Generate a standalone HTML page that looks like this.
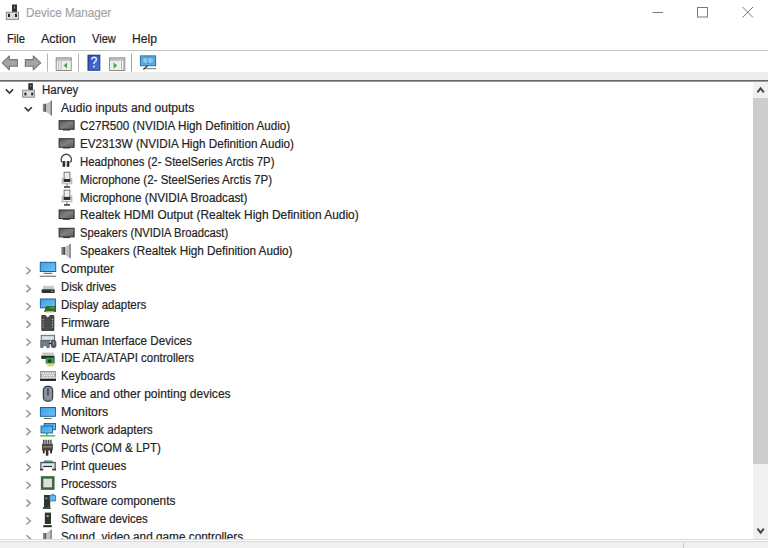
<!DOCTYPE html>
<html><head><meta charset="utf-8">
<style>
html,body{margin:0;padding:0;}
body{width:768px;height:548px;overflow:hidden;position:relative;background:#fff;font-family:"Liberation Sans",sans-serif;}
.a{position:absolute;}
.t{position:absolute;white-space:nowrap;font-size:12.5px;line-height:18px;color:#242424;transform-origin:0 0;-webkit-text-stroke:0.2px currentColor;}
.ic{position:absolute;overflow:visible;}
#tree{position:absolute;left:0;top:81px;width:753px;height:458px;overflow:hidden;}
#treein{position:absolute;left:0;top:-81px;width:753px;height:620px;}
</style></head><body>
<!-- title bar -->
<svg class="ic" style="left:0;top:0" width="24" height="24">
  <rect x="12" y="4.5" width="5" height="7.5" fill="#2f2f2f"/>
  <rect x="14" y="6.5" width="1" height="2" fill="#aaa"/>
  <rect x="6.3" y="12.2" width="12.2" height="7.2" fill="#dcdcdc" stroke="#8a8a8a" stroke-width="1"/>
  <rect x="8" y="13.8" width="2" height="3.2" fill="#222"/>
  <rect x="15" y="13.8" width="2" height="3.2" fill="#222"/>
</svg>
<span class="t" id="title" style="left:25.5px;top:4px;color:#a2a2a2;-webkit-text-stroke:0.15px #a2a2a2;transform:scaleX(0.936)">Device Manager</span>
<svg class="ic" style="left:640px;top:0" width="128" height="26">
  <line x1="12.5" y1="12.5" x2="23" y2="12.5" stroke="#7a7a7a" stroke-width="1"/>
  <rect x="57.5" y="7.5" width="10" height="9.5" fill="none" stroke="#7a7a7a" stroke-width="1"/>
  <path d="M102.5 7 L113 17.5 M113 7 L102.5 17.5" stroke="#7a7a7a" stroke-width="1"/>
</svg>
<!-- menu -->
<span class="t" id="m0" style="left:7px;top:30px;transform:scaleX(0.9)">File</span>
<span class="t" id="m1" style="left:41px;top:30px;">Action</span>
<span class="t" id="m2" style="left:91.5px;top:30px;transform:scaleX(0.885)">View</span>
<span class="t" id="m3" style="left:132px;top:30px;transform:scaleX(0.97)">Help</span>
<div class="a" style="left:0;top:50px;width:768px;height:1px;background:#c4c4c4"></div>
<!-- toolbar -->
<svg class="ic" style="left:0;top:51px" width="170" height="22">
  <defs>
    <linearGradient id="hb" x1="0" y1="0" x2="1" y2="1"><stop offset="0" stop-color="#2f4fb0"/><stop offset="1" stop-color="#4f74d6"/></linearGradient>
  </defs>
  <!-- back arrow -->
  <path d="M2.3 11.9 L9.3 5 L9.3 8.6 L17.4 8.6 L17.4 15.2 L9.3 15.2 L9.3 18.9 Z" fill="#a4a4a4" stroke="#747474" stroke-width="1.1" stroke-linejoin="round"/>
  <!-- forward arrow -->
  <path d="M40.7 11.9 L33.3 5 L33.3 8.6 L25.3 8.6 L25.3 15.2 L33.3 15.2 L33.3 18.9 Z" fill="#a4a4a4" stroke="#747474" stroke-width="1.1" stroke-linejoin="round"/>
  <line x1="47.5" y1="2.6" x2="47.5" y2="20.6" stroke="#b4b4b4" stroke-width="1"/>
  <!-- console tree icon -->
  <rect x="56.2" y="6.9" width="15" height="12.6" fill="#f4f4f4" stroke="#8c8c8c" stroke-width="1"/>
  <rect x="56.2" y="6.9" width="15" height="2.6" fill="#979797"/>
  <rect x="57" y="7.5" width="13.4" height="1.2" fill="#d0d0d0"/>
  <rect x="58.2" y="10" width="1" height="9" fill="#b8b8b8"/>
  <rect x="60.6" y="10" width="1" height="9" fill="#b8b8b8"/>
  <rect x="62" y="10" width="8.6" height="9" fill="#e4f4e0"/>
  <path d="M63.6 14.6 L67 11.6 L67 17.6 Z" fill="#49a449"/>
  <line x1="78.5" y1="2.6" x2="78.5" y2="20.6" stroke="#b4b4b4" stroke-width="1"/>
  <!-- help -->
  <rect x="88" y="4.2" width="11.8" height="15" fill="url(#hb)" stroke="#1c2f7a" stroke-width="1"/>
  <path d="M91.6 8.6 Q91.8 6.3 94 6.3 Q96.4 6.3 96.4 8.6 Q96.4 10.2 94.8 11 Q93.9 11.5 93.9 13" fill="none" stroke="#dfe6ff" stroke-width="1.5"/>
  <rect x="93.1" y="14.6" width="1.7" height="1.8" fill="#dfe6ff"/>
  <!-- action pane icon -->
  <rect x="109.6" y="6.9" width="15.2" height="12.6" fill="#f4f4f4" stroke="#8c8c8c" stroke-width="1"/>
  <rect x="109.6" y="6.9" width="15.2" height="2.6" fill="#979797"/>
  <rect x="110.4" y="7.5" width="13.6" height="1.2" fill="#d0d0d0"/>
  <rect x="121" y="10" width="1" height="9" fill="#b8b8b8"/>
  <rect x="123.2" y="10" width="1" height="9" fill="#b8b8b8"/>
  <rect x="110.2" y="10" width="10" height="9" fill="#e4f4e0"/>
  <path d="M117.2 14.6 L113.6 11.4 L113.6 17.8 Z" fill="#49a449"/>
  <line x1="131.5" y1="2.6" x2="131.5" y2="20.6" stroke="#a0a0a0" stroke-width="1"/>
  <!-- scan monitor -->
  <rect x="140.4" y="4.9" width="15.2" height="9.8" fill="#5cb2ee" stroke="#2a6a9e" stroke-width="1"/>
  <circle cx="145.6" cy="9.6" r="3.3" fill="#86c8f4" stroke="#3f8cc6" stroke-width="0.8"/>
  <circle cx="150.6" cy="9.6" r="3.3" fill="#86c8f4" stroke="#3f8cc6" stroke-width="0.8"/>
  <path d="M147.5 14.8 L143.3 18.6" stroke="#3a3a3a" stroke-width="1.3"/>
  <path d="M145 17.6 L156 17.6" stroke="#8a8a8a" stroke-width="1.2"/>
</svg>
<div class="a" style="left:0;top:72px;width:768px;height:8px;background:#ececec"></div>
<div class="a" style="left:0;top:80px;width:768px;height:1px;background:#666"></div>
<div class="a" style="left:0;top:81px;width:768px;height:1px;background:#9c9c9c"></div>
<!-- tree -->
<div id="tree"><div id="treein">
<span class="t tree" id="r0" style="left:41.70px;top:81.36px;transform:scaleX(0.9154)">Harvey</span>
<svg class="ic" style="left:0;top:0" width="40" height="620"><path d="M5.90 89.36 L9.50 93.06 L13.10 89.36" fill="none" stroke="#383838" stroke-width="1.6"/></svg>
<span class="t tree" id="r1" style="left:60.80px;top:99.23px;transform:scaleX(0.9679)">Audio inputs and outputs</span>
<svg class="ic" style="left:0;top:0" width="40" height="620"><path d="M24.65 107.23 L28.25 110.93 L31.85 107.23" fill="none" stroke="#383838" stroke-width="1.6"/></svg>
<span class="t tree" id="r2" style="left:79.50px;top:117.10px;transform:scaleX(0.9339)">C27R500 (NVIDIA High Definition Audio)</span>
<span class="t tree" id="r3" style="left:79.50px;top:134.97px;transform:scaleX(0.9357)">EV2313W (NVIDIA High Definition Audio)</span>
<span class="t tree" id="r4" style="left:79.50px;top:152.84px;transform:scaleX(0.9085)">Headphones (2- SteelSeries Arctis 7P)</span>
<span class="t tree" id="r5" style="left:79.50px;top:170.71px;transform:scaleX(0.9213)">Microphone (2- SteelSeries Arctis 7P)</span>
<span class="t tree" id="r6" style="left:79.50px;top:188.58px;transform:scaleX(0.9420)">Microphone (NVIDIA Broadcast)</span>
<span class="t tree" id="r7" style="left:79.50px;top:206.45px;transform:scaleX(0.9526)">Realtek HDMI Output (Realtek High Definition Audio)</span>
<span class="t tree" id="r8" style="left:79.50px;top:224.32px;transform:scaleX(0.8963)">Speakers (NVIDIA Broadcast)</span>
<span class="t tree" id="r9" style="left:79.50px;top:242.19px;transform:scaleX(0.9382)">Speakers (Realtek High Definition Audio)</span>
<span class="t tree" id="r10" style="left:60.80px;top:260.06px;transform:scaleX(0.9667)">Computer</span>
<svg class="ic" style="left:0;top:0" width="40" height="620"><path d="M26.4 267.26 L30.3 270.76 L26.4 274.26" fill="none" stroke="#969696" stroke-width="1.5"/></svg>
<span class="t tree" id="r11" style="left:60.80px;top:277.93px;transform:scaleX(0.9033)">Disk drives</span>
<svg class="ic" style="left:0;top:0" width="40" height="620"><path d="M26.4 285.13 L30.3 288.63 L26.4 292.13" fill="none" stroke="#969696" stroke-width="1.5"/></svg>
<span class="t tree" id="r12" style="left:60.80px;top:295.80px;transform:scaleX(0.9152)">Display adapters</span>
<svg class="ic" style="left:0;top:0" width="40" height="620"><path d="M26.4 303.00 L30.3 306.50 L26.4 310.00" fill="none" stroke="#969696" stroke-width="1.5"/></svg>
<span class="t tree" id="r13" style="left:60.80px;top:313.67px;transform:scaleX(0.9333)">Firmware</span>
<svg class="ic" style="left:0;top:0" width="40" height="620"><path d="M26.4 320.87 L30.3 324.37 L26.4 327.87" fill="none" stroke="#969696" stroke-width="1.5"/></svg>
<span class="t tree" id="r14" style="left:60.80px;top:331.54px;transform:scaleX(0.9317)">Human Interface Devices</span>
<svg class="ic" style="left:0;top:0" width="40" height="620"><path d="M26.4 338.74 L30.3 342.24 L26.4 345.74" fill="none" stroke="#969696" stroke-width="1.5"/></svg>
<span class="t tree" id="r15" style="left:60.80px;top:349.41px;transform:scaleX(0.9174)">IDE ATA/ATAPI controllers</span>
<svg class="ic" style="left:0;top:0" width="40" height="620"><path d="M26.4 356.61 L30.3 360.11 L26.4 363.61" fill="none" stroke="#969696" stroke-width="1.5"/></svg>
<span class="t tree" id="r16" style="left:60.80px;top:367.28px;transform:scaleX(0.9086)">Keyboards</span>
<svg class="ic" style="left:0;top:0" width="40" height="620"><path d="M26.4 374.48 L30.3 377.98 L26.4 381.48" fill="none" stroke="#969696" stroke-width="1.5"/></svg>
<span class="t tree" id="r17" style="left:60.80px;top:385.15px;transform:scaleX(0.9649)">Mice and other pointing devices</span>
<svg class="ic" style="left:0;top:0" width="40" height="620"><path d="M26.4 392.35 L30.3 395.85 L26.4 399.35" fill="none" stroke="#969696" stroke-width="1.5"/></svg>
<span class="t tree" id="r18" style="left:60.80px;top:403.02px;transform:scaleX(0.9830)">Monitors</span>
<svg class="ic" style="left:0;top:0" width="40" height="620"><path d="M26.4 410.22 L30.3 413.72 L26.4 417.22" fill="none" stroke="#969696" stroke-width="1.5"/></svg>
<span class="t tree" id="r19" style="left:60.80px;top:420.89px;transform:scaleX(0.9361)">Network adapters</span>
<svg class="ic" style="left:0;top:0" width="40" height="620"><path d="M26.4 428.09 L30.3 431.59 L26.4 435.09" fill="none" stroke="#969696" stroke-width="1.5"/></svg>
<span class="t tree" id="r20" style="left:60.80px;top:438.76px;transform:scaleX(0.9215)">Ports (COM &amp; LPT)</span>
<svg class="ic" style="left:0;top:0" width="40" height="620"><path d="M26.4 445.96 L30.3 449.46 L26.4 452.96" fill="none" stroke="#969696" stroke-width="1.5"/></svg>
<span class="t tree" id="r21" style="left:60.80px;top:456.63px;transform:scaleX(0.9304)">Print queues</span>
<svg class="ic" style="left:0;top:0" width="40" height="620"><path d="M26.4 463.83 L30.3 467.33 L26.4 470.83" fill="none" stroke="#969696" stroke-width="1.5"/></svg>
<span class="t tree" id="r22" style="left:60.80px;top:474.50px;transform:scaleX(0.8885)">Processors</span>
<svg class="ic" style="left:0;top:0" width="40" height="620"><path d="M26.4 481.70 L30.3 485.20 L26.4 488.70" fill="none" stroke="#969696" stroke-width="1.5"/></svg>
<span class="t tree" id="r23" style="left:60.80px;top:492.37px;transform:scaleX(0.9458)">Software components</span>
<svg class="ic" style="left:0;top:0" width="40" height="620"><path d="M26.4 499.57 L30.3 503.07 L26.4 506.57" fill="none" stroke="#969696" stroke-width="1.5"/></svg>
<span class="t tree" id="r24" style="left:60.80px;top:510.24px;transform:scaleX(0.9117)">Software devices</span>
<svg class="ic" style="left:0;top:0" width="40" height="620"><path d="M26.4 517.44 L30.3 520.94 L26.4 524.44" fill="none" stroke="#969696" stroke-width="1.5"/></svg>
<span class="t tree" id="r25" style="left:60.80px;top:528.11px;transform:scaleX(0.9427)">Sound, video and game controllers</span>
<svg class="ic" style="left:0;top:0" width="40" height="620"><path d="M26.4 535.31 L30.3 538.81 L26.4 542.31" fill="none" stroke="#969696" stroke-width="1.5"/></svg>
<svg class="ic" style="left:0;top:0" width="753" height="620">
<defs>
  <linearGradient id="teal" x1="0" y1="0" x2="1" y2="0"><stop offset="0" stop-color="#3a90c8"/><stop offset="1" stop-color="#2fb8a8"/></linearGradient>
  <linearGradient id="mon" x1="0" y1="0" x2="1" y2="1">
    <stop offset="0" stop-color="#555"/><stop offset="0.5" stop-color="#808080"/><stop offset="1" stop-color="#5a5a5a"/>
  </linearGradient>
  <linearGradient id="spk" x1="0" y1="0" x2="1" y2="0">
    <stop offset="0" stop-color="#bdbdbd"/><stop offset="0.6" stop-color="#c4c4c4"/><stop offset="1" stop-color="#5e5e5e"/>
  </linearGradient>
  <linearGradient id="spkr" x1="0" y1="0" x2="1" y2="0">
    <stop offset="0" stop-color="#a0a0a0"/><stop offset="1" stop-color="#3e3e3e"/>
  </linearGradient>
  <linearGradient id="blue" x1="0" y1="0" x2="1" y2="1">
    <stop offset="0" stop-color="#3fa0e8"/><stop offset="1" stop-color="#6cc4f4"/>
  </linearGradient>
</defs>
<!-- row0 Harvey computer -->
<g>
  <rect x="28.3" y="83.2" width="4.6" height="6.8" fill="#2e2e2e"/>
  <rect x="30" y="85" width="1.2" height="1.6" fill="#9a9a9a"/>
  <rect x="22.6" y="90.2" width="11.8" height="7" fill="#dcdcdc" stroke="#8c8c8c" stroke-width="1"/>
  <rect x="24.4" y="92.6" width="2" height="2.8" fill="#252525"/>
  <rect x="31.2" y="92.6" width="2" height="2.8" fill="#252525"/>
</g>
<!-- row1 speaker -->
<g>
  <rect x="42.8" y="103.8" width="3.6" height="8" fill="url(#spkr)"/>
  <path d="M46.2 103.8 L52 100.2 L52 116 L46.2 112.1 Z" fill="url(#spk)"/>
</g>
<!-- level2 monitors rows 2,3,7,8 -->
<g id="monA">
  <rect x="59.1" y="120.7" width="15" height="8.6" fill="url(#mon)" stroke="#2c2c2c" stroke-width="1"/>
  <rect x="63" y="129.5" width="7" height="1" fill="#333"/>
</g>
<g transform="translate(0,18)">
  <rect x="59.1" y="120.7" width="15" height="8.6" fill="url(#mon)" stroke="#2c2c2c" stroke-width="1"/>
  <rect x="63" y="129.5" width="7" height="1" fill="#333"/>
</g>
<g transform="translate(0,89.3)">
  <rect x="59.1" y="120.7" width="15" height="8.6" fill="url(#mon)" stroke="#2c2c2c" stroke-width="1"/>
  <rect x="63" y="129.5" width="7" height="1" fill="#333"/>
</g>
<g transform="translate(0,107.6)">
  <rect x="59.1" y="120.7" width="15" height="8.6" fill="url(#mon)" stroke="#2c2c2c" stroke-width="1"/>
  <rect x="63" y="129.5" width="7" height="1" fill="#333"/>
</g>
<!-- row4 headphones -->
<g>
  <path d="M62.2 162.5 A5.1 5.1 0 1 1 70.4 162.5" fill="none" stroke="#4a4a4a" stroke-width="1.5"/>
  <rect x="62.2" y="161" width="3.2" height="5.8" rx="0.6" fill="#8a8a8a"/>
  <rect x="63.2" y="161" width="1.6" height="5.8" fill="#1c1c1c"/>
  <rect x="66.5" y="161" width="3.2" height="5.8" rx="0.6" fill="#8a8a8a"/>
  <rect x="67.3" y="161" width="1.6" height="5.8" fill="#1c1c1c"/>
</g>
<!-- row5,6 microphone -->
<g id="mic">
  <path d="M62.4 177.4 L62.4 183.6 L71.6 183.6 L71.6 177.4" fill="none" stroke="#bdbdbd" stroke-width="1.5"/>
  <rect x="64.1" y="172.2" width="5.8" height="9.4" fill="#ececec" stroke="#6a6a6a" stroke-width="0.9"/>
  <rect x="63.7" y="179" width="6.6" height="3" fill="#2e2e2e"/>
  <rect x="66.3" y="184" width="1.4" height="2.3" fill="#9a9a9a"/>
  <rect x="64" y="186.2" width="6" height="1.6" fill="#3e3e3e"/>
</g>
<g transform="translate(0,17.9)">
  <path d="M62.4 177.4 L62.4 183.6 L71.6 183.6 L71.6 177.4" fill="none" stroke="#bdbdbd" stroke-width="1.5"/>
  <rect x="64.1" y="172.2" width="5.8" height="9.4" fill="#ececec" stroke="#6a6a6a" stroke-width="0.9"/>
  <rect x="63.7" y="179" width="6.6" height="3" fill="#2e2e2e"/>
  <rect x="66.3" y="184" width="1.4" height="2.3" fill="#9a9a9a"/>
  <rect x="64" y="186.2" width="6" height="1.6" fill="#3e3e3e"/>
</g>
<!-- row9 speaker -->
<g>
  <rect x="61.2" y="247" width="3.8" height="7.8" fill="url(#spkr)"/>
  <path d="M65 247 L70.7 243.4 L70.7 258.7 L65 254.8 Z" fill="url(#spk)"/>
</g>
<!-- row10 computer -->
<g>
  <rect x="40.3" y="262.3" width="15.4" height="9.2" fill="url(#blue)" stroke="#1e5f99" stroke-width="1"/>
  <rect x="43.6" y="272.8" width="8.7" height="1" fill="#555"/>
  <rect x="39.8" y="275.6" width="16.3" height="1.4" fill="#8a8a8a"/>
</g>
<!-- row11 disk -->
<g>
  <path d="M42.5 289.2 L43.5 285.8 L53.5 285.8 L54.5 289.2 Z" fill="#c8c8c8"/>
  <rect x="41.6" y="289.2" width="13.1" height="3.9" rx="0.8" fill="#2e2e2e"/>
  <rect x="51" y="290.6" width="2" height="1.2" fill="#5fbf4f"/>
</g>
<!-- row12 display adapters -->
<g>
  <rect x="40.4" y="299" width="15" height="8.8" fill="url(#blue)" stroke="#1e5f99" stroke-width="1"/>
  <path d="M44 312 L46 306 L56 306 L56 312 Z" fill="#2f6a2a"/>
  <path d="M48 308 L53 306.5 L55 309 Z" fill="#58a040"/>
  <rect x="46" y="311" width="8" height="1.4" fill="#c9b44a"/>
</g>
<!-- row13 firmware -->
<g>
  <path d="M41.8 315.5 L45.5 315.5 L47.8 318.3 L50.1 315.5 L53.9 315.5 L53.9 330.5 L41.8 330.5 Z" fill="#4a4a4a" stroke="#2a2a2a" stroke-width="0.8"/>
  <g fill="#cfcfcf">
    <rect x="42.6" y="319" width="1" height="1"/><rect x="42.6" y="321.5" width="1" height="1"/><rect x="42.6" y="324" width="1" height="1"/><rect x="42.6" y="326.5" width="1" height="1"/>
    <rect x="52.1" y="319" width="1" height="1"/><rect x="52.1" y="321.5" width="1" height="1"/><rect x="52.1" y="324" width="1" height="1"/><rect x="52.1" y="326.5" width="1" height="1"/>
  </g>
</g>
<!-- row14 HID -->
<g>
  <rect x="41.2" y="335.3" width="13.4" height="5.2" fill="#c2ccd4" stroke="#5a6670" stroke-width="0.9"/>
  <rect x="42.4" y="336.8" width="11" height="0.8" fill="#eef2f4"/>
  <rect x="42.4" y="338.4" width="11" height="0.8" fill="#eef2f4"/>
  <path d="M40.6 340.6 L49.2 340.6 L49.4 347 Q49.4 347.8 48.6 347.8 L47 347.8 L46 345.6 L43.6 345.6 L42.8 347.8 L41.4 347.8 Q40.6 347.8 40.6 347 Z" fill="#6f7e8a" stroke="#46525c" stroke-width="0.6"/>
  <rect x="49" y="342.6" width="2.6" height="1.6" fill="#2a2a2a"/>
  <rect x="51.3" y="340.4" width="4.6" height="7.2" rx="1.8" fill="#555b62" stroke="#333" stroke-width="0.7"/>
  <rect x="53.2" y="341.6" width="0.9" height="3" fill="#a8b0b8"/>
</g>
<!-- row15 IDE -->
<g>
  <rect x="42.3" y="352.6" width="11.5" height="2.3" fill="#c4c4c4"/>
  <rect x="41.3" y="355.6" width="13.1" height="3.3" fill="#1f2f22"/>
  <rect x="45.6" y="357.6" width="9.2" height="6" fill="#3f8f4f"/>
  <circle cx="49.6" cy="361.1" r="1.8" fill="#0e4a18"/>
  <rect x="47.2" y="364.2" width="6.6" height="2.2" fill="#e4cc68"/>
</g>
<!-- row16 keyboard -->
<g>
  <rect x="40.5" y="371.5" width="15" height="8.6" fill="#a9a9a9" stroke="#8a8a8a" stroke-width="0.8"/>
  <rect x="41.5" y="372.4" width="1.2" height="1.5" fill="#f4f4f4"/><rect x="43.2" y="372.4" width="1.2" height="1.5" fill="#f4f4f4"/><rect x="45.0" y="372.4" width="1.2" height="1.5" fill="#f4f4f4"/><rect x="46.8" y="372.4" width="1.2" height="1.5" fill="#f4f4f4"/><rect x="48.5" y="372.4" width="1.2" height="1.5" fill="#f4f4f4"/><rect x="50.2" y="372.4" width="1.2" height="1.5" fill="#f4f4f4"/><rect x="52.0" y="372.4" width="1.2" height="1.5" fill="#f4f4f4"/><rect x="53.8" y="372.4" width="1.2" height="1.5" fill="#f4f4f4"/><rect x="42.3" y="374.5" width="1.2" height="1.5" fill="#f4f4f4"/><rect x="44.0" y="374.5" width="1.2" height="1.5" fill="#f4f4f4"/><rect x="45.8" y="374.5" width="1.2" height="1.5" fill="#f4f4f4"/><rect x="47.5" y="374.5" width="1.2" height="1.5" fill="#f4f4f4"/><rect x="49.3" y="374.5" width="1.2" height="1.5" fill="#f4f4f4"/><rect x="51.0" y="374.5" width="1.2" height="1.5" fill="#f4f4f4"/><rect x="52.8" y="374.5" width="1.2" height="1.5" fill="#f4f4f4"/><rect x="41.9" y="376.6" width="1.2" height="1.5" fill="#f4f4f4"/><rect x="43.6" y="376.6" width="1.2" height="1.5" fill="#f4f4f4"/><rect x="45.4" y="376.6" width="1.2" height="1.5" fill="#f4f4f4"/><rect x="47.1" y="376.6" width="1.2" height="1.5" fill="#f4f4f4"/><rect x="48.9" y="376.6" width="1.2" height="1.5" fill="#f4f4f4"/><rect x="50.6" y="376.6" width="1.2" height="1.5" fill="#f4f4f4"/><rect x="52.4" y="376.6" width="1.2" height="1.5" fill="#f4f4f4"/><rect x="54.1" y="376.6" width="1.2" height="1.5" fill="#f4f4f4"/>
  <rect x="40.1" y="379" width="15.8" height="1.9" fill="#1e1e1e"/>
</g>
<!-- row17 mouse -->
<g>
  <rect x="43.4" y="386.4" width="9.2" height="14.8" rx="3.8" fill="#8793a0" stroke="#3a3a3a" stroke-width="1.2"/>
  <rect x="47.3" y="388.4" width="1.3" height="7" fill="#2c3640"/>
</g>
<!-- row18 monitors -->
<g>
  <rect x="40.4" y="407.5" width="15" height="8.8" fill="url(#blue)" stroke="#1e5f99" stroke-width="1"/>
  <rect x="44" y="418" width="7.7" height="1" fill="#666"/>
</g>
<!-- row19 network -->
<g>
  <rect x="44.1" y="423.5" width="11.4" height="6.2" fill="url(#blue)" stroke="#1e5f99" stroke-width="0.9"/>
  <rect x="41" y="426" width="11.5" height="7" fill="url(#blue)" stroke="#1e5f99" stroke-width="0.9"/>
  <rect x="46" y="433" width="1.5" height="2.5" fill="#3aa23a"/>
  <rect x="40.2" y="435" width="15" height="1.6" fill="#5cc05c"/>
</g>
<!-- row20 ports -->
<g>
  <rect x="42.8" y="439.8" width="8.7" height="3.6" fill="#d8d8d8"/>
  <rect x="43" y="439.8" width="1.4" height="3.6" fill="#4a4a4a"/><rect x="45.4" y="439.8" width="1.4" height="3.6" fill="#4a4a4a"/><rect x="47.8" y="439.8" width="1.4" height="3.6" fill="#4a4a4a"/><rect x="50.2" y="439.8" width="1.4" height="3.6" fill="#4a4a4a"/>
  <rect x="42" y="443.6" width="10.9" height="7" rx="0.8" fill="#474747"/>
  <rect x="43" y="446" width="9" height="1.6" fill="#7c7c7c"/>
  <rect x="42.8" y="450" width="1.8" height="3.3" fill="#2b2b2b"/>
  <rect x="50.1" y="450" width="1.9" height="3.3" fill="#2b2b2b"/>
  <rect x="45.8" y="450" width="2.6" height="5.7" rx="0.6" fill="#3a3326"/>
</g>
<!-- row21 printer -->
<g>
  <rect x="43.9" y="460.4" width="8.6" height="2.8" fill="url(#teal)"/>
  <rect x="40.3" y="462.3" width="15.4" height="7.8" fill="#dde6e6"/>
  <rect x="40.1" y="461.9" width="15.8" height="1.3" fill="#4a4a4a"/>
  <rect x="40.1" y="462" width="1.5" height="8.3" fill="#707070"/>
  <rect x="54.4" y="462" width="1.5" height="8.3" fill="#707070"/>
  <rect x="40.1" y="468.7" width="3.3" height="1.7" fill="#3a3a3a"/>
  <rect x="52.3" y="468.7" width="3.6" height="1.7" fill="#3a3a3a"/>
  <rect x="43.3" y="465.9" width="8.8" height="1.3" fill="#222"/>
  <rect x="43.6" y="467.2" width="8.2" height="3.6" fill="#ffffff"/>
</g>
<!-- row22 processor -->
<g>
  <rect x="42.1" y="477.4" width="11.2" height="11.2" fill="#dedede" stroke="#3b673c" stroke-width="2.5"/>
</g>
<!-- row23 software components -->
<g>
  <rect x="44" y="495" width="6.2" height="12" fill="#2e352f"/>
  <rect x="45.6" y="497.5" width="1.6" height="1.6" fill="#7fcf7f"/>
  <rect x="42.9" y="507.2" width="7.7" height="1.6" fill="#1e1e1e"/>
  <path d="M49.9 495.5 L52 495.5 L52 494.2 L53.4 494.2 L53.4 495.5 L55.6 495.5 L55.6 500.9 L49.9 500.9 Z" fill="#6fb6ea" stroke="#2f78c0" stroke-width="0.9"/>
</g>
<!-- row24 software devices -->
<g>
  <rect x="44.8" y="512.6" width="6.2" height="11.4" fill="#2e352f"/>
  <rect x="46.8" y="515.2" width="1.8" height="1.8" fill="#8fd48f"/>
  <rect x="43.3" y="525.2" width="8.4" height="2" fill="#1e1e1e"/>
</g>
<!-- row25 sound -->
<g>
  <rect x="42.9" y="533" width="3.5" height="8" fill="url(#spkr)"/>
  <path d="M46.2 533 L51.7 529.3 L51.7 545 L46.2 541 Z" fill="url(#spk)"/>
</g>
</svg>

</div></div>
<!-- scrollbar -->
<div class="a" style="left:753px;top:82px;width:15px;height:457px;background:#f0f0f0"></div>
<div class="a" style="left:753px;top:98px;width:15px;height:366px;background:#cdcdcd"></div>
<svg class="ic" style="left:753px;top:81px" width="15" height="17"><path d="M4.4 11.4 L7.6 7.4 L10.8 11.4" fill="none" stroke="#474747" stroke-width="2"/></svg>
<svg class="ic" style="left:753px;top:522px" width="15" height="17"><path d="M4.4 6.6 L7.6 10.6 L10.8 6.6" fill="none" stroke="#474747" stroke-width="2"/></svg>
<!-- status -->
<div class="a" style="left:0;top:539px;width:768px;height:1px;background:#dadada"></div>
<div class="a" style="left:0;top:541px;width:768px;height:1px;background:#dadada"></div>
<div class="a" style="left:0;top:542px;width:768px;height:6px;background:#f0f0f0"></div>
<div class="a" style="left:683px;top:543px;width:1px;height:5px;background:#c8c8c8"></div>
</body></html>
